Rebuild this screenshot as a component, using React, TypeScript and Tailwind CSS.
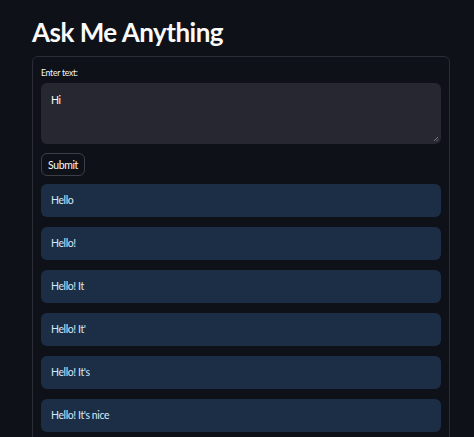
import React from "react";

const lines = ["Hello", "Hello!", "Hello! It", "Hello! It'", "Hello! It's", "Hello! It's nice"];

export default function App() {
  return (
    <div
      className="w-[474px] h-[437px] overflow-hidden bg-[#0e1117] text-[#fafafa] pl-[32px] pr-[24px]"
      style={{ fontFamily: "Lato, sans-serif" }}
    >
      <h1 className="pt-[14px] h-[56px] text-[26px] font-bold leading-[36px] tracking-[-0.5px] text-[#fafafa]">
        Ask Me Anything
      </h1>
      <div className="w-[418px] border border-[#2a2d36] rounded-[6px] px-[8px] pt-[9px] pb-[20px]">
        <div className="text-[8.5px] leading-[14px] tracking-[-0.2px] text-[#fafafa] mb-[3px]">Enter text:</div>
        <div className="relative h-[61px] rounded-[6px] bg-[#262730] px-[10px] pt-[9px] text-[10.5px] tracking-[-0.4px] leading-[16px]">
          Hi
          <svg className="absolute right-[2px] bottom-[2px]" width="6" height="6" viewBox="0 0 6 6">
            <path d="M5 1 L1 5 M5 3.5 L3.5 5" stroke="#8a8c93" strokeWidth="0.8" />
          </svg>
        </div>
        <button className="mt-[9px] h-[23px] w-[44px] rounded-[6px] border border-[#3b3e47] bg-[#0e1117] text-[10.5px] tracking-[-0.4px] leading-[16px] text-[#fafafa]">
          Submit
        </button>
        <div className="mt-[8px] flex flex-col gap-[10px]">
          {lines.map((l) => (
            <div
              key={l}
              className="h-[33px] rounded-[6px] bg-[#1c2e45] px-[10px] flex items-center text-[10.5px] tracking-[-0.4px] text-[#d6e8f9]"
            >
              {l}
            </div>
          ))}
        </div>
      </div>
    </div>
  );
}
